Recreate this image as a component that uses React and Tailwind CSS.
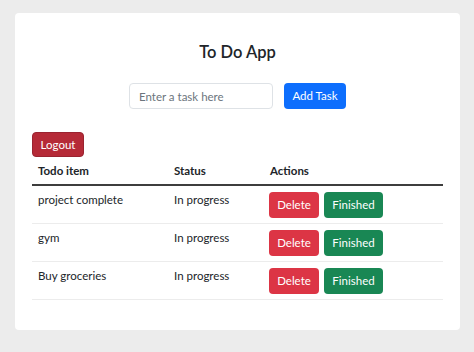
import React from 'react';

const todos = [
  { name: 'project complete', status: 'In progress' },
  { name: 'gym', status: 'In progress' },
  { name: 'Buy groceries', status: 'In progress' },
];

export default function App() {
  return (
    <div className="w-[474px] h-[352px] bg-[#ececec] pt-[13px] pl-[15px] font-['Lato',sans-serif] text-[#212529]">
      <div className="w-[445px] h-[317px] bg-white rounded-[4px] px-[17px] pt-[25px]">
        <h3 className="text-center text-[16.5px] leading-[28px] font-semibold">To Do App</h3>
        <div className="flex justify-center gap-[11px] mt-[17px]">
          <input
            placeholder="Enter a task here"
            className="w-[144px] h-[26px] px-[9px] text-[11.5px] border border-[#dee2e6] rounded-[4px] placeholder:text-[#6c757d] outline-none"
          />
          <button className="w-[62px] h-[26px] text-[11.5px] text-white bg-[#0d6efd] rounded-[4px]">Add Task</button>
        </div>
        <button className="mt-[23px] w-[52px] h-[25px] text-[11.5px] text-white bg-[#b52a37] border border-[#9a2330] rounded-[4px]">
          Logout
        </button>
        <table className="w-[411px] text-[11.5px] border-collapse">
          <thead>
            <tr className="border-b-2 border-[#3d3d3d]">
              <th className="w-[136px] text-left font-bold px-[6px] pt-[5px] pb-[4px] leading-[18px]">Todo item</th>
              <th className="w-[96px] text-left font-bold px-[6px] pt-[5px] pb-[4px] leading-[18px]">Status</th>
              <th className="text-left font-bold px-[6px] pt-[5px] pb-[4px] leading-[18px]">Actions</th>
            </tr>
          </thead>
          <tbody>
            {todos.map((t) => (
              <tr key={t.name} className="border-b border-[#ececec]">
                <td className="align-top px-[6px] pt-[5px] leading-[18px]">{t.name}</td>
                <td className="align-top px-[6px] pt-[5px] leading-[18px]">{t.status}</td>
                <td className="align-top pl-[5px] pt-[6px] pb-[5px]">
                  <div className="flex gap-[5px]">
                    <button className="w-[50px] h-[26px] text-[11.5px] text-white bg-[#dc3545] rounded-[4px]">Delete</button>
                    <button className="w-[59px] h-[26px] text-[11.5px] text-white bg-[#198754] rounded-[4px]">Finished</button>
                  </div>
                </td>
              </tr>
            ))}
          </tbody>
        </table>
      </div>
    </div>
  );
}
